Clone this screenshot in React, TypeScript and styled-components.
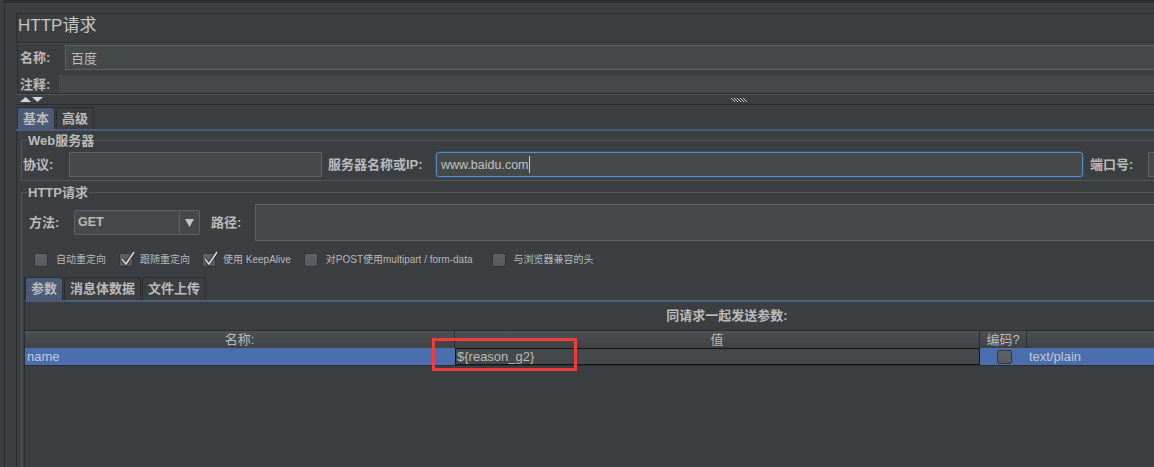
import React from "react";
import styled, { createGlobalStyle } from "styled-components";

const FONT = `"Liberation Sans", "Noto Sans CJK SC", sans-serif`;

const GlobalStyle = createGlobalStyle`
  html, body { margin: 0; padding: 0; background: #3c3f41; }
  body { font-family: ${FONT}; color: #bbbbbb; }
  * { box-sizing: border-box; }
`;

const Window = styled.div`
  width: 1154px;
  height: 467px;
  overflow: hidden;
  background: #3c3f41;
  padding-left: 4px;
`;

const Frame = styled.div`
  height: 100%;
  border-left: 1px solid #2b2d2e;
  border-top: 3px solid #2b2d2e;
  padding: 10px 0 0 11px;
`;

const Main = styled.div`
  width: 1420px;
  display: flex;
  flex-direction: column;
`;

const TitleBox = styled.div`
  height: 30px;
  border: 1px solid #2b2d2e;
  border-right: 0;
  padding: 2px 0 0 1px;
  font-size: 17px;
  line-height: 20px;
  color: #c4c4c4;
`;

const NameBox = styled.div`
  margin-left: 1px;
  height: 51px;
  border: 1px solid #2b2d2e;
  border-top-color: #4a4d4f;
  border-right: 0;
  padding: 1px 0 0 1px;
  display: flex;
  flex-direction: column;
`;

const FieldRow = styled.div<{ $h: number; $mt?: number }>`
  display: flex;
  align-items: center;
  height: ${(p) => p.$h}px;
  margin-top: ${(p) => p.$mt ?? 0}px;
`;

const Label = styled.span<{ $w: number; $pl?: number; $ml?: number }>`
  flex: none;
  width: ${(p) => p.$w}px;
  padding-left: ${(p) => p.$pl ?? 1}px;
  margin-left: ${(p) => p.$ml ?? 0}px;
  font-size: 13px;
  line-height: 17px;
  font-weight: 600;
  color: #bbbbbb;
  white-space: nowrap;
`;

const TextField = styled.div<{ $w?: number; $h?: number; $focus?: boolean }>`
  ${(p) => (p.$w ? `width: ${p.$w}px; flex: none;` : "flex: 1;")}
  height: ${(p) => p.$h ?? 25}px;
  background: #45494a;
  border: 1px solid ${(p) => (p.$focus ? "#5b8bc0" : "#5e6163")};
  border-radius: ${(p) => (p.$focus ? 3 : 0)}px;
  box-shadow: ${(p) => (p.$focus ? "0 0 0 1px #34506f" : "none")};
  padding-left: ${(p) => (p.$focus ? 4 : 5)}px;
  display: flex;
  align-items: center;
  font-size: 13px;
  color: #bbbbbb;
  white-space: nowrap;
`;

const UrlText = styled.span`
  font-size: 12.5px;
  color: #c0c0c0;
`;

const Caret = styled.span`
  display: inline-block;
  width: 1px;
  height: 17px;
  background: #d0d0d0;
`;

const PlainField = styled.div`
  flex: 1;
  height: 18px;
  background: #45494a;
`;

const Splitter = styled.div`
  height: 11px;
  border-top: 1px solid #55585a;
  border-bottom: 1px solid #2b2d2e;
  display: flex;
  align-items: center;
  padding-left: 4px;
`;

const Grip = styled.svg`
  margin-left: 688px;
`;

const TabStrip = styled.div<{ $pl: number; $pt: number }>`
  display: flex;
  padding: ${(p) => p.$pt}px 0 0 ${(p) => p.$pl}px;
`;

const Tab = styled.div<{ $active?: boolean; $h: number }>`
  height: ${(p) => p.$h}px;
  padding: 0 5px;
  border: 1px solid #2b2d2e;
  border-bottom: 0;
  border-radius: 3px 3px 0 0;
  background: ${(p) => (p.$active ? "#4b5a75" : "#3c3f41")};
  font-size: 13px;
  line-height: ${(p) => p.$h - 1}px;
  font-weight: 600;
  color: #bbbbbb;
  margin-right: 1px;
`;

const TabLine = styled.div`
  height: 2px;
  background: #4a5b7c;
`;

const TabBody = styled.div`
  border-left: 1px solid #2b2d2e;
  padding-left: 4px;
  display: flex;
  flex-direction: column;
`;

const Group = styled.fieldset<{ $mt: number; $pb: number }>`
  margin: ${(p) => p.$mt}px 0 0 0;
  padding: 0 0 ${(p) => p.$pb}px 0;
  border: 1px solid #55585a;
  min-width: 0;
`;

const Legend = styled.legend`
  margin-left: 5px;
  padding: 0 1px;
  font-size: 13px;
  line-height: 17px;
  font-weight: 700;
  color: #bbbbbb;
`;

const Combo = styled.div`
  flex: none;
  width: 126px;
  height: 25px;
  display: flex;
  border: 1px solid #5e6163;
  border-radius: 2px;
  background: #45494a;
`;

const ComboValue = styled.div`
  flex: 1;
  padding-left: 3px;
  font-size: 12.5px;
  font-weight: 600;
  line-height: 23px;
  color: #bbbbbb;
`;

const ComboArrow = styled.div`
  width: 20px;
  border-left: 1px solid #5e6163;
  display: flex;
  align-items: center;
  justify-content: center;
`;

const CheckRow = styled.div`
  display: flex;
  align-items: center;
  height: 14px;
  margin-top: 12px;
  padding-left: 12px;
`;

const CheckItem = styled.div<{ $gap: number }>`
  display: flex;
  align-items: center;
  margin-right: ${(p) => p.$gap}px;
`;

const BoxWrap = styled.span`
  position: relative;
  flex: none;
  width: 14px;
  height: 14px;
`;

const Box = styled.span`
  display: block;
  width: 14px;
  height: 14px;
  border-radius: 2px;
  border: 1px solid #333537;
  background: linear-gradient(#606265, #56585b);
`;

const Tick = styled.svg`
  position: absolute;
  left: 1px;
  top: -3px;
`;

const CheckText = styled.span<{ $ml: number }>`
  margin-left: ${(p) => p.$ml}px;
  font-size: 10px;
  line-height: 14px;
  color: #b8b8b8;
  white-space: nowrap;
`;

const SubArea = styled.div`
  margin: 10px 0 0 2px;
  border-left: 1px solid #2b2d2e;
  height: 200px;
  display: flex;
  flex-direction: column;
`;

const PanelTitle = styled.div`
  width: 1404px;
  height: 28px;
  text-align: center;
  font-size: 13px;
  line-height: 28px;
  font-weight: 600;
  color: #bbbbbb;
`;

const Table = styled.div`
  position: relative;
  width: 1404px;
  border-top: 1px solid #2b2d2e;
`;

const HeaderRow = styled.div`
  display: flex;
  height: 17px;
  background: linear-gradient(#4e5154, #3f4244);
`;

const HeaderCell = styled.div<{ $w?: number }>`
  ${(p) => (p.$w ? `width: ${p.$w}px; flex: none;` : "flex: 1;")}
  border-right: 1px solid #2b2d2e;
  text-align: center;
  font-size: 13px;
  line-height: 17px;
  color: #bbbbbb;
`;

const BodyRow = styled.div`
  display: flex;
  height: 17px;
  border-bottom: 1px solid #2b2d2e;
  box-sizing: content-box;
`;

const Cell = styled.div<{ $w?: number; $edit?: boolean; $center?: boolean }>`
  ${(p) => (p.$w ? `width: ${p.$w}px; flex: none;` : "flex: 1;")}
  background: ${(p) => (p.$edit ? "#45494a" : "#4b6eaf")};
  border: ${(p) => (p.$edit ? "1px solid #141516" : "0")};
  padding-left: ${(p) => (p.$edit ? 1 : 2)}px;
  display: flex;
  align-items: center;
  justify-content: ${(p) => (p.$center ? "center" : "flex-start")};
  font-size: 13px;
  color: ${(p) => (p.$edit ? "#bbbbbb" : "#c3c8d2")};
  white-space: nowrap;
`;

const SmallBox = styled.span`
  width: 15px;
  height: 14px;
  border-radius: 2px;
  border: 1px solid #353739;
  background: linear-gradient(#616366, #57595c);
`;

const Marker = styled.div`
  position: absolute;
  left: 407px;
  top: 7px;
  width: 145px;
  height: 33px;
  border: 3px solid #ef3b3b;
`;

const Check = ({ checked }: { checked?: boolean }) => (
  <BoxWrap>
    <Box />
    {checked && (
      <Tick width="16" height="16" viewBox="0 0 16 16">
        <path d="M2 9 L6 14 L14 2" fill="none" stroke="#2a2b2c" strokeWidth="3.4" />
        <path d="M2 9 L6 14 L14 2" fill="none" stroke="#d6d6d6" strokeWidth="1.7" />
      </Tick>
    )}
  </BoxWrap>
);

const options = [
  { label: "自动重定向", checked: false, gap: 13 },
  { label: "跟随重定向", checked: true, gap: 12 },
  { label: "使用 KeepAlive", checked: true, gap: 13 },
  { label: "对POST使用multipart / form-data", checked: false, gap: 19 },
  { label: "与浏览器兼容的头", checked: false, gap: 0 },
];

export default function App() {
  return (
    <>
      <GlobalStyle />
      <Window>
        <Frame>
          <Main>
            <TitleBox>HTTP请求</TitleBox>
            <NameBox>
              <FieldRow $h={25}>
                <Label $w={46}>名称:</Label>
                <TextField>百度</TextField>
              </FieldRow>
              <FieldRow $h={18} $mt={5}>
                <Label $w={40}>注释:</Label>
                <PlainField />
              </FieldRow>
            </NameBox>
            <Splitter>
              <svg width="23" height="5" viewBox="0 0 23 5">
                <path d="M0 5 L5.5 0 L11 5 Z" fill="#d4d4d4" />
                <path d="M12 0 L23 0 L17.5 5 Z" fill="#d4d4d4" />
              </svg>
              <Grip width="16" height="4" viewBox="0 0 16 4">
                {[0, 3, 6, 9, 12].map((x) => (
                  <g key={x} fill="#c8c8c8">
                    <rect x={x} y={0} width="1" height="1" />
                    <rect x={x + 1} y={1} width="1" height="1" />
                    <rect x={x + 2} y={2} width="1" height="1" />
                    <rect x={x + 3} y={3} width="1" height="1" />
                  </g>
                ))}
              </Grip>
            </Splitter>
            <TabStrip $pl={1} $pt={2}>
              <Tab $active $h={22}>基本</Tab>
              <Tab $h={22}>高级</Tab>
            </TabStrip>
            <TabLine />
            <TabBody>
              <Group $mt={1} $pb={3}>
                <Legend>Web服务器</Legend>
                <FieldRow $h={25} $mt={3}>
                  <Label $w={47}>协议:</Label>
                  <TextField $w={253} />
                  <Label $w={109} $ml={5}>服务器名称或IP:</Label>
                  <TextField $w={647} $focus>
                    <UrlText>www.baidu.com</UrlText>
                    <Caret />
                  </TextField>
                  <Label $w={59} $ml={6}>端口号:</Label>
                  <TextField $w={120} />
                </FieldRow>
              </Group>
              <Group $mt={3} $pb={0}>
                <Legend>HTTP请求</Legend>
                <FieldRow $h={37} $mt={3}>
                  <Label $w={52} $pl={7}>方法:</Label>
                  <Combo>
                    <ComboValue>GET</ComboValue>
                    <ComboArrow>
                      <svg width="9" height="9" viewBox="0 0 9 9">
                        <path d="M0 1 L9 1 L4.5 9 Z" fill="#c4c4c4" />
                      </svg>
                    </ComboArrow>
                  </Combo>
                  <Label $w={45} $ml={10}>路径:</Label>
                  <TextField $h={37} />
                </FieldRow>
                <CheckRow>
                  {options.map((o) => (
                    <CheckItem key={o.label} $gap={o.gap}>
                      <Check checked={o.checked} />
                      <CheckText $ml={o.checked ? 7 : 8}>{o.label}</CheckText>
                    </CheckItem>
                  ))}
                </CheckRow>
                <SubArea>
                  <TabStrip $pl={0} $pt={0}>
                    <Tab $active $h={23}>参数</Tab>
                    <Tab $h={23}>消息体数据</Tab>
                    <Tab $h={23}>文件上传</Tab>
                  </TabStrip>
                  <TabLine />
                  <PanelTitle>同请求一起发送参数:</PanelTitle>
                  <Table>
                    <HeaderRow>
                      <HeaderCell $w={430}>名称:</HeaderCell>
                      <HeaderCell $w={525}>值</HeaderCell>
                      <HeaderCell $w={47}>编码?</HeaderCell>
                      <HeaderCell />
                    </HeaderRow>
                    <BodyRow>
                      <Cell $w={430}>name</Cell>
                      <Cell $w={525} $edit>
                        {"${reason_g2}"}
                      </Cell>
                      <Cell $w={47} $center>
                        <SmallBox />
                      </Cell>
                      <Cell>text/plain</Cell>
                    </BodyRow>
                    <Marker />
                  </Table>
                </SubArea>
              </Group>
            </TabBody>
          </Main>
        </Frame>
      </Window>
    </>
  );
}
